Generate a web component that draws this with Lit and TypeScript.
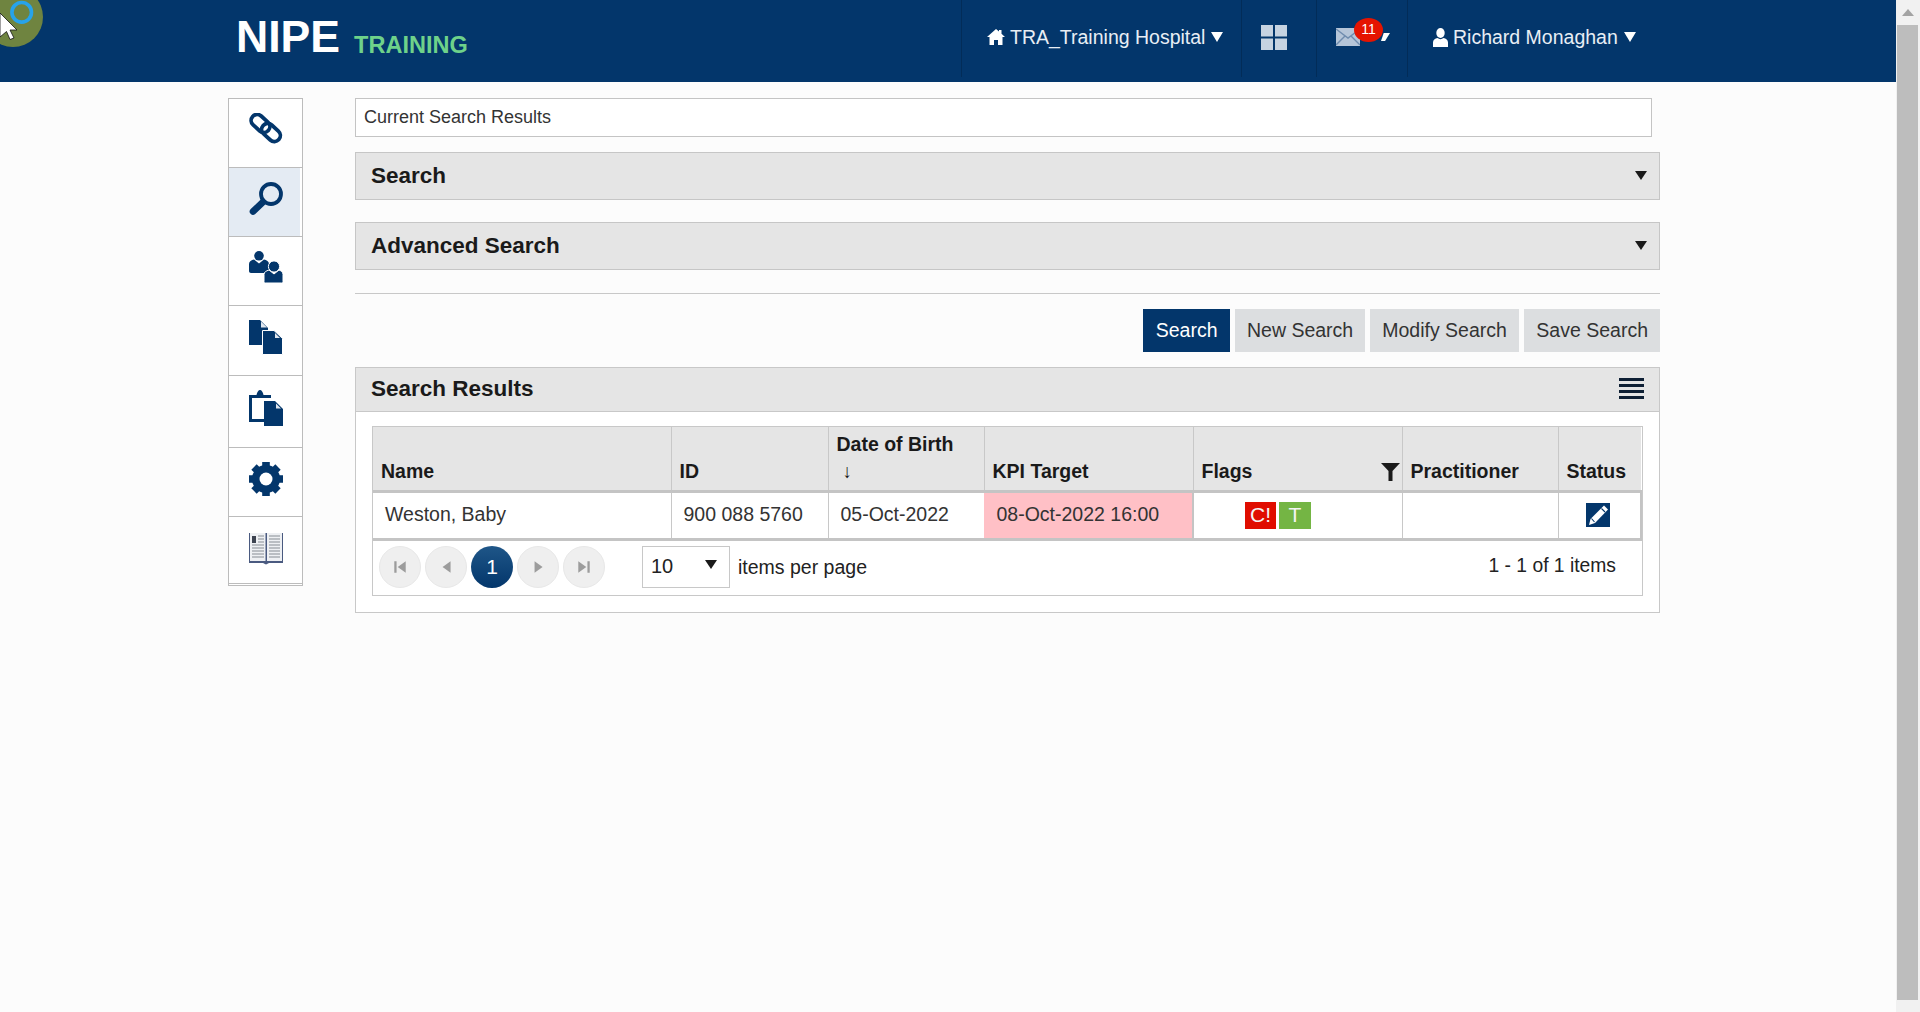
import { css, html, LitElement, svg } from "lit";
import { customElement } from "lit/decorators.js";

const navy = "#03366b";

// sidebar icons, all in a 34x36 box
const sideIcons = [
  svg`<g fill="none" stroke="${navy}" stroke-width="3.8"><rect x="1" y="4.500" width="21" height="12" rx="6" transform="rotate(42 11.500 10.500)"/><rect x="11.500" y="13.500" width="21" height="12" rx="6" transform="rotate(42 22 19.500)"/></g>`,
  svg`<circle cx="22" cy="12" r="10" fill="none" stroke="${navy}" stroke-width="3.800"/><path d="M14 20 L4 29.500" stroke="${navy}" stroke-width="6.600" stroke-linecap="round"/>`,
  svg`<g fill="${navy}"><circle cx="10" cy="4.800" r="4.800"/><path d="M0 20v-7c0-2.500 2.500-4 5-4.500l5 4 5-4c2.500.5 5 2 5 4.500v7c0 1-.8 2-2 2h-16c-1.200 0-2-1-2-2z"/><circle cx="25" cy="15.500" r="5.600" stroke="#fff" stroke-width="1"/><path d="M15 30.500v-7c0-2.500 2-3.500 5-4.500l5 4 5-4c2 .8 4 2 4 4.500v7c0 1-.8 1.500-1.700 1.500h-15.600c-1 0-1.700-.5-1.700-1.500z" stroke="#fff" stroke-width="1"/></g>`,
  svg`<path d="M0 0h11l8 8v17h-19z" fill="${navy}"/><path d="M12 1.500v6h6" fill="#dfe6ee"/><path d="M13.500 10.500h11.500l8.500 8v16h-20z" fill="${navy}" stroke="#fff" stroke-width="1"/><path d="M26 13v5h5z" fill="#dfe6ee"/>`,
  svg`<g fill="${navy}"><path d="M0 5h7.500c.5-3 2-5 3.500-5s3 2 3.500 5h7.500v3h-19v21h12v3h-15z"/><path d="M15 11h11l8 8v17h-19z"/></g><path d="M27 13.500v5h5z" fill="#dfe6ee"/>`,
  svg`<circle cx="17" cy="17" r="14" fill="${navy}"/><g stroke="${navy}" stroke-width="7.600"><path d="M17 0v34M0 17h34M5 5l24 24M29 5l-24 24"/></g><circle cx="17" cy="17" r="6.500" fill="#fff"/>`,
  svg`<path d="M0 2h34v30h-14l-3 1.500-3-1.500h-14z" fill="#4a5a80"/><path d="M1 2h15.500v28h-15.500zM18 2h15v28h-15z" fill="#eef0f3"/><g stroke="#a9adb4" stroke-width="1.600"><path d="M9 5h6M9 8h6M9 11h6M3 14h12M3 17h12M3 20h12M3 23h12M3 26h12M20 5h11M20 8h11M20 11h11M20 14h11M20 17h11M20 20h11M20 23h11M20 26h11"/></g><rect x="3" y="5" width="4" height="7" fill="#3d4350"/>`,
];

@customElement("app-root")
export class AppRoot extends LitElement {
  static styles = css`
    :host {
      display: flex;
      width: 1920px;
      height: 1012px;
      overflow: hidden;
      position: relative;
      background: #fcfcfc;
      color: #222;
      font-family: "Liberation Sans", Arial, sans-serif;
      font-size: 19.5px;
    }
    * {
      box-sizing: border-box;
    }
    .page {
      flex: 1;
      min-width: 0;
    }
    .topbar {
      height: 82px;
      background: #03366b;
      display: flex;
      color: #e8eef5;
      padding-left: 236px;
    }
    .logo {
      display: flex;
      align-items: baseline;
      padding-top: 12px;
      font-weight: 700;
    }
    .logo b {
      font-size: 44.6px;
      color: #fff;
    }
    .logo span {
      font-size: 23.5px;
      color: #6ed28a;
      margin-left: 14px;
      position: relative;
      top: 1px;
    }
    .nav {
      display: flex;
      margin-left: auto;
      margin-right: 236px;
      height: 77px;
    }
    .nav-item {
      display: flex;
      align-items: center;
      border-left: 1px solid #022c58;
      padding-bottom: 3px;
      position: relative;
    }
    .nav-hospital {
      width: 280px;
      padding-left: 25px;
    }
    .nav-grid {
      width: 75px;
      padding-left: 19px;
    }
    .nav-mail {
      width: 91px;
      padding-left: 19px;
    }
    .nav-user {
      width: 253px;
      padding-left: 25px;
    }
    .nav-icon {
      margin-right: 5px;
      flex: none;
    }
    .caret {
      width: 0;
      height: 0;
      border-left: 6px solid transparent;
      border-right: 6px solid transparent;
      border-top: 10px solid #fff;
      margin-left: 6px;
    }
    .mail-badge {
      position: absolute;
      left: 37px;
      top: 18px;
      width: 29px;
      height: 24px;
      border-radius: 50%;
      background: #e51400;
      color: #fff;
      font-size: 14px;
      text-align: center;
      line-height: 23px;
    }
    .mail-caret {
      position: absolute;
      left: 64px;
      top: 33px;
      width: 9px;
      height: 8px;
      background: #fff;
      clip-path: polygon(30% 0, 100% 0, 45% 100%, 0 100%);
    }
    .layout {
      display: flex;
      padding: 16px 0 0 228px;
    }
    .sidebar {
      width: 75px;
      flex: none;
      border: 1px solid #bcbcbc;
      background: #fff;
      height: 488px;
      border-bottom: 3px double #bcbcbc;
    }
    .side-item {
      height: 69px;
      border-bottom: 1px solid #bcbcbc;
      display: flex;
      justify-content: center;
      padding-top: 14px;
    }
    .side-item:nth-child(4) {
      height: 70px;
    }
    .side-item:nth-child(5) {
      height: 72px;
    }
    .side-item:last-child {
      border-bottom: none;
      height: 67px;
    }
    .side-item.active {
      background: #e4ebf3;
      box-shadow: inset -2px 0 0 #fff;
    }
    .content {
      margin-left: 52px;
      width: 1305px;
    }
    .current {
      width: 1297px;
      height: 39px;
      border: 1px solid #c4c4c4;
      background: #fff;
      display: flex;
      align-items: center;
      padding-left: 8px;
      font-size: 18px;
      color: #333;
    }
    .bar {
      height: 48px;
      background: #e5e5e5;
      border: 1px solid #c6c6c6;
      display: flex;
      align-items: center;
      justify-content: space-between;
      padding: 0 12px 0 15px;
      font-size: 22.5px;
      font-weight: 700;
      color: #1a1a1a;
    }
    .bar-first {
      margin-top: 15px;
    }
    .bar-second {
      margin-top: 22px;
    }
    .bar-arrow {
      width: 0;
      height: 0;
      border-left: 6px solid transparent;
      border-right: 6px solid transparent;
      border-top: 9px solid #1a1a1a;
      margin-bottom: 2px;
    }
    hr {
      border: none;
      border-top: 1px solid #c8c8c8;
      margin: 23px 0 0;
    }
    .actions {
      display: flex;
      justify-content: flex-end;
      gap: 5px;
      margin-top: 15px;
    }
    .btn {
      height: 43px;
      padding: 0 12px;
      background: #dcdee0;
      color: #333;
      display: flex;
      align-items: center;
      border: none;
      font: inherit;
    }
    .btn.primary {
      background: #03366b;
      color: #fff;
      padding: 0 13px;
    }
    .btn.slim {
      padding: 0 11.5px;
    }
    .btn.wide {
      padding: 0 12.5px;
    }
    .panel {
      margin-top: 15px;
      height: 246px;
      border: 1px solid #c8c8c8;
      background: #fff;
    }
    .panel-head {
      height: 44px;
      background: #e5e5e5;
      border-bottom: 1px solid #c8c8c8;
      display: flex;
      align-items: center;
      justify-content: space-between;
      padding: 0 15px 2px 15px;
      font-size: 22.5px;
      font-weight: 700;
      color: #1a1a1a;
    }
    .grid-wrap {
      margin: 14px 15px 0 16px;
      width: 1271px;
      height: 170px;
      border: 1px solid #c8c8c8;
    }
    table {
      border-collapse: collapse;
      table-layout: fixed;
      width: 100%;
    }
    th {
      height: 64px;
      background: #e5e5e5;
      border-left: 1px solid #c8c8c8;
      border-bottom: 3px solid #c4c4c4;
      font-size: 19.5px;
      font-weight: 700;
      color: #1a1a1a;
      text-align: left;
      vertical-align: bottom;
      padding: 0 8px 5px;
      line-height: 27px;
      position: relative;
    }
    th:first-child,
    td:first-child {
      border-left: none;
    }
    th .sort {
      display: block;
      padding-left: 6px;
      font-size: 19px;
    }
    th svg {
      position: absolute;
      right: 2px;
      bottom: 9px;
    }
    td {
      height: 48px;
      border-left: 1px solid #c8c8c8;
      border-bottom: 3px solid #c4c4c4;
      padding: 0 12px 2px;
      color: #333;
      background: #fff;
    }
    td.late {
      background: #ffc0c6;
      border-left: none;
      padding-left: 12.5px;
    }
    td.flags {
      padding: 0 0 0 51px;
      border-left: 2px solid #c4c4c4;
    }
    td.status {
      padding: 4px 0 0 27px;
      border-right: 2px solid #c4c4c4;
    }
    .flag-row {
      display: flex;
      gap: 3px;
    }
    .flag {
      width: 31px;
      height: 27px;
      display: flex;
      align-items: center;
      justify-content: center;
      color: #f4f4f4;
      font-size: 21px;
    }
    .flag.red {
      background: #e00d00;
    }
    .flag.green {
      background: #74b544;
      width: 32px;
    }
    .pager {
      display: flex;
      align-items: center;
      height: 53px;
      padding-left: 6px;
    }
    .circle {
      width: 42px;
      height: 42px;
      border-radius: 50%;
      background: #efefef;
      border: 1px solid #e8e8e8;
      display: flex;
      align-items: center;
      justify-content: center;
      margin-right: 4px;
      flex: none;
    }
    .circle.on {
      background: linear-gradient(#1f5688, #03366b);
      border: none;
      color: #fff;
      font-size: 21px;
    }
    .select {
      width: 88px;
      height: 42px;
      margin-left: 33px;
      border: 1px solid #c8c8c8;
      display: flex;
      align-items: center;
      justify-content: space-between;
      padding: 0 12px 2px 8px;
      font-size: 20px;
    }
    .select i {
      width: 0;
      height: 0;
      border-left: 6px solid transparent;
      border-right: 6px solid transparent;
      border-top: 9px solid #1a1a1a;
      margin-bottom: 4px;
    }
    .per-page {
      margin-left: 8px;
    }
    .total {
      margin-left: auto;
      margin-right: 26px;
      padding-bottom: 3px;
      font-size: 19.3px;
    }
    .scrollbar {
      width: 24px;
      flex: none;
      background: #f1f1f1;
      display: flex;
      flex-direction: column;
      align-items: center;
      padding: 9px 2px 12px 1px;
    }
    .scroll-up {
      width: 0;
      height: 0;
      border-left: 6px solid transparent;
      border-right: 6px solid transparent;
      border-bottom: 7px solid #a3a3a3;
      margin-bottom: 9px;
    }
    .thumb {
      flex: 1;
      width: 100%;
      background: #bdbdbd;
    }
    .cursor {
      position: absolute;
      left: 0;
      top: 0;
    }
  `;

  private caret() {
    return html`<span class="caret"></span>`;
  }

  private pagerIcon(d: string) {
    return html`<svg width="16" height="16" viewBox="0 0 14 14"><path d="${d}" fill="#9c9c9c"/></svg>`;
  }

  render() {
    return html`
      <div class="page">
        <header class="topbar">
          <div class="logo"><b>NIPE</b><span>TRAINING</span></div>
          <nav class="nav">
            <div class="nav-item nav-hospital">
              <svg class="nav-icon" width="18" height="16" viewBox="0 0 18 16"><path d="M9 0l3 2.600V1h2.500v3.800L18 8h-2.500v8h-4.500v-5H7v5H2.500V8H0z" fill="#fff"/></svg>
              TRA_Training Hospital${this.caret()}
            </div>
            <div class="nav-item nav-grid">
              <svg width="26" height="25" viewBox="0 0 26 25"><path d="M0 0h12v11.500H0zM14 0h12v11.500H14zM0 13.500h12V25H0zM14 13.500h12V25H14z" fill="#c6d3e1"/></svg>
            </div>
            <div class="nav-item nav-mail">
              <svg width="24" height="18" viewBox="0 0 24 18"><rect width="24" height="18" fill="#b5c5d8"/><path d="M0 1l12 9 12-9M0 17l9-9M24 17l-9-9" fill="none" stroke="#6f8cae" stroke-width="1.400"/></svg>
              <span class="mail-badge">11</span>
              <span class="mail-caret"></span>
            </div>
            <div class="nav-item nav-user">
              <svg class="nav-icon" width="15" height="19" viewBox="0 0 15 19"><ellipse cx="7.500" cy="5" rx="4.200" ry="5" fill="#fff"/><path d="M0 19v-4.500c0-2.500 2-4 4.500-4.500 1.800 1.500 4.200 1.500 6 0 2.500.5 4.500 2 4.500 4.500v4.500z" fill="#fff"/></svg>
              Richard Monaghan${this.caret()}
            </div>
          </nav>
        </header>
        <div class="layout">
          <aside class="sidebar">
            ${sideIcons.map(
              (icon, i) => html`
                <div class="side-item ${i === 1 ? "active" : ""}">
                  <svg width="34" height="36" viewBox="0 0 34 36">${icon}</svg>
                </div>
              `
            )}
          </aside>
          <main class="content">
            <div class="current">Current Search Results</div>
            <div class="bar bar-first">Search<span class="bar-arrow"></span></div>
            <div class="bar bar-second">Advanced Search<span class="bar-arrow"></span></div>
            <hr />
            <div class="actions">
              <button class="btn primary">Search</button>
              <button class="btn slim">New Search</button>
              <button class="btn wide">Modify Search</button>
              <button class="btn">Save Search</button>
            </div>
            <section class="panel">
              <div class="panel-head">
                Search Results
                <svg width="25" height="21" viewBox="0 0 25 21"><path d="M0 0h25v3H0zM0 6h25v3H0zM0 12h25v3H0zM0 18h25v3H0z" fill="#0f2035"/></svg>
              </div>
              <div class="grid-wrap">
                <table>
                  <colgroup>
                    <col style="width:298px" />
                    <col style="width:157px" />
                    <col style="width:156px" />
                    <col style="width:209px" />
                    <col style="width:209px" />
                    <col style="width:156px" />
                    <col />
                  </colgroup>
                  <thead>
                    <tr>
                      <th>Name</th>
                      <th>ID</th>
                      <th>Date of Birth<span class="sort">↓</span></th>
                      <th>KPI Target</th>
                      <th>
                        Flags
                        <svg width="19" height="18" viewBox="0 0 19 18"><path d="M0 0h19l-7.500 8v10h-4V8z" fill="#1a1a1a"/></svg>
                      </th>
                      <th>Practitioner</th>
                      <th>Status</th>
                    </tr>
                  </thead>
                  <tbody>
                    <tr>
                      <td>Weston, Baby</td>
                      <td>900 088 5760</td>
                      <td>05-Oct-2022</td>
                      <td class="late">08-Oct-2022 16:00</td>
                      <td class="flags">
                        <div class="flag-row">
                          <span class="flag red">C!</span>
                          <span class="flag green">T</span>
                        </div>
                      </td>
                      <td></td>
                      <td class="status">
                        <svg width="24" height="24" viewBox="0 0 24 24"><rect width="24" height="24" fill="#03366b"/><path d="M18 2.500l4 4L9 20l-6 2 1.500-6z" fill="#fff"/><path d="M15.500 5.500l3.500 3.500M5.500 15.500l3 3.500" stroke="#03366b" stroke-width="1.100"/></svg>
                      </td>
                    </tr>
                  </tbody>
                </table>
                <div class="pager">
                  <span class="circle">${this.pagerIcon("M2 2h2v10H2zM12 2v10L5 7z")}</span>
                  <span class="circle">${this.pagerIcon("M11 2v10L4 7z")}</span>
                  <span class="circle on">1</span>
                  <span class="circle">${this.pagerIcon("M4 2v10l7-5z")}</span>
                  <span class="circle">${this.pagerIcon("M2 2v10l7-5zM10 2h2v10h-2z")}</span>
                  <div class="select">10<i></i></div>
                  <span class="per-page">items per page</span>
                  <span class="total">1 - 1 of 1 items</span>
                </div>
              </div>
            </section>
          </main>
        </div>
      </div>
      <div class="scrollbar">
        <span class="scroll-up"></span>
        <div class="thumb"></div>
      </div>
      <svg class="cursor" width="50" height="50" viewBox="0 0 50 50">
        <circle cx="13" cy="17" r="30" fill="#6f8440"/>
        <circle cx="21.700" cy="12.300" r="9.800" fill="none" stroke="#27a3ea" stroke-width="3.600"/>
        <path d="M0 13l17 17h-7l4 8-4 1.500-3.500-8L0 37z" fill="#fff" stroke="#111" stroke-width="0.800"/>
      </svg>
    `;
  }
}

declare global {
  interface HTMLElementTagNameMap {
    "app-root": AppRoot;
  }
}
